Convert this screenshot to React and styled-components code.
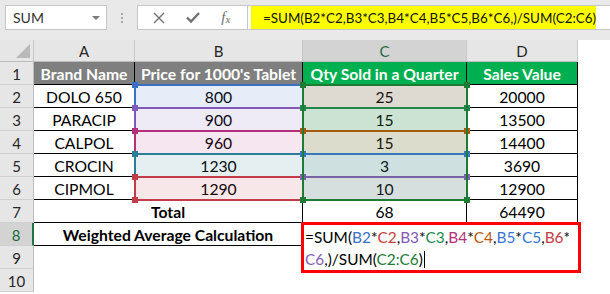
import React from 'react';
import styled, { createGlobalStyle } from 'styled-components';

const COLS = [34, 101, 168, 164, 111, 32];
const HEAD_H = 22;
const ROW_H = 23;
const colX = (i) => COLS.slice(0, i).reduce((a, b) => a + b, 0);
const rowY = (r) => HEAD_H + (r - 1) * ROW_H;

const K = {
  blue: '#3b6fc4',
  red: '#cc3a40',
  purple: '#7f5ab6',
  green: '#1f8a4c',
  magenta: '#b3307a',
  orange: '#b8560d',
  teal: '#2a7c98',
  blue2: '#3877cf',
  red2: '#c23c48',
  purple2: '#8460b8',
  range: '#1e7b34',
};

const GlobalStyle = createGlobalStyle`
  body {
    margin: 0;
    background: #fff;
    font-family: "Lato", "Open Sans", sans-serif;
    overflow: hidden;
  }
`;

const Page = styled.div`
  width: 610px;
  height: 294px;
  display: flex;
  flex-direction: column;
  overflow: hidden;
`;

const Toolbar = styled.div`
  height: 40px;
  box-sizing: border-box;
  padding: 5px 0 0 5px;
  background: #e9e9e9;
  display: flex;
  align-items: flex-start;
`;

const NameBox = styled.div`
  width: 102px;
  height: 25px;
  box-sizing: border-box;
  background: #fff;
  border: 1px solid #c6c6c6;
  display: flex;
  align-items: center;
  justify-content: space-between;
  padding: 0 6px 0 7px;
  font-size: 14px;
  color: #333;
`;

const Arrow = styled.span`
  width: 0;
  height: 0;
  border-left: 4px solid transparent;
  border-right: 4px solid transparent;
  border-top: 4px solid #7a7a7a;
`;

const Grip = styled.div`
  width: 30px;
  height: 25px;
  display: flex;
  flex-direction: column;
  align-items: center;
  justify-content: center;
  gap: 2px;
  span {
    width: 2px;
    height: 2px;
    background: #a8a8a8;
  }
`;

const FxBox = styled.div`
  width: 111px;
  height: 25px;
  box-sizing: border-box;
  background: #fff;
  border: 1px solid #c6c6c6;
  display: flex;
  align-items: center;
  justify-content: space-around;
  padding: 0 6px 0 4px;
  color: #6f6f6f;
`;

const Fx = styled.span`
  font-family: "Liberation Serif", serif;
  font-style: italic;
  font-size: 15px;
  color: #6f6f6f;
  sub {
    font-size: 11px;
    vertical-align: -1px;
  }
`;

const FormulaInput = styled.div`
  flex: 1;
  height: 25px;
  box-sizing: border-box;
  background: #fff;
  border-top: 1px solid #c6c6c6;
  border-bottom: 1px solid #c6c6c6;
  padding: 0 0 0 3px;
  display: flex;
  align-items: center;
`;

const Highlight = styled.div`
  width: 345px;
  height: 23px;
  background: #ffff00;
  display: flex;
  align-items: center;
  padding-left: 12px;
  box-sizing: border-box;
  font-size: 13.4px;
  color: #111;
  white-space: nowrap;
`;

const Sheet = styled.div`
  position: relative;
  display: grid;
  grid-template-columns: ${COLS.map((c) => c + 'px').join(' ')};
  grid-template-rows: ${HEAD_H}px repeat(10, ${ROW_H}px);
`;

const Corner = styled.div`
  background: #e6e6e6;
  border-right: 1px solid #c8c8c8;
  border-bottom: 1px solid #bdbdbd;
  display: flex;
  align-items: flex-end;
  justify-content: flex-end;
  padding: 0 3px 3px 0;
  &::after {
    content: '';
    width: 14px;
    height: 14px;
    background: #b9b9b9;
    clip-path: polygon(100% 0, 100% 100%, 0 100%);
  }
`;

const ColHead = styled.div`
  background: ${(p) => (p.$blank ? '#fff' : p.$sel ? '#d3d3d3' : '#e6e6e6')};
  color: ${(p) => (p.$sel ? '#1d6b3c' : '#262626')};
  border-right: ${(p) => (p.$blank ? 'none' : '1px solid #c8c8c8')};
  border-bottom: ${(p) => (p.$blank ? 'none' : '1px solid #bdbdbd')};
  display: flex;
  align-items: center;
  justify-content: center;
  font-size: 15px;
`;

const RowHead = styled.div`
  background: ${(p) => (p.$sel ? '#d3d3d3' : '#e6e6e6')};
  color: ${(p) => (p.$sel ? '#1d6b3c' : '#262626')};
  border-bottom: 1px solid #cfcfcf;
  border-right: ${(p) => (p.$sel ? '2px solid #217346' : '1px solid #bdbdbd')};
  display: flex;
  align-items: center;
  justify-content: center;
  font-size: 15px;
  padding-top: 1px;
  box-sizing: border-box;
`;

const Cell = styled.div`
  grid-column: span ${(p) => p.$span || 1};
  display: flex;
  align-items: center;
  justify-content: center;
  padding-top: 1px;
  box-sizing: border-box;
  font-size: 15.7px;
  white-space: nowrap;
  background: ${(p) => p.$bg || '#fff'};
  color: ${(p) => p.$fg || '#000'};
  font-weight: ${(p) => (p.$bold ? 700 : 400)};
  border-right: ${(p) => (p.$r ? '1px solid #000' : 'none')};
  border-bottom: ${(p) => (p.$b ? '1px solid #000' : 'none')};
`;

const RefBox = styled.div`
  position: absolute;
  box-sizing: border-box;
  border: 2px solid ${(p) => p.$c};
  background: ${(p) => p.$c}1f;
`;

const Handle = styled.span`
  position: absolute;
  width: 6px;
  height: 6px;
  background: ${(p) => p.$c};
  ${(p) => (p.$top ? 'top: -4px;' : 'bottom: -4px;')}
  ${(p) => (p.$left ? 'left: -4px;' : 'right: -4px;')}
`;

const Editor = styled.div`
  position: absolute;
  left: 301px;
  top: ${rowY(8) - 1}px;
  width: 280px;
  height: 51px;
  box-sizing: border-box;
  border: 3px solid #ff0000;
  background: #fff;
  padding: 1px 0 0 1px;
  font-size: 15.4px;
  line-height: 22px;
  color: #000;
  white-space: nowrap;
  z-index: 2;
`;

const Ref = styled.span`
  color: ${(p) => p.$c};
`;

const Caret = styled.span`
  display: inline-block;
  width: 1px;
  height: 17px;
  background: #000;
  vertical-align: -3px;
  margin-left: 1px;
`;

const XIcon = () => (
  <svg width="12" height="12" viewBox="0 0 12 12">
    <path d="M1 1 L11 11 M11 1 L1 11" stroke="#707070" strokeWidth="1.4" fill="none" />
  </svg>
);

const CheckIcon = () => (
  <svg width="14" height="11" viewBox="0 0 14 11">
    <path d="M1 5.5 L5 9.5 L13 1" stroke="#707070" strokeWidth="2.4" fill="none" />
  </svg>
);

const refs = [
  ['B', 2, 1, K.blue],
  ['C', 2, 1, K.red],
  ['B', 3, 1, K.purple],
  ['C', 3, 1, K.green],
  ['B', 4, 1, K.magenta],
  ['C', 4, 1, K.orange],
  ['B', 5, 1, K.teal],
  ['C', 5, 1, K.blue2],
  ['B', 6, 1, K.red2],
  ['C', 6, 1, K.purple2],
  ['C', 2, 5, K.range],
];

const colIndex = { A: 1, B: 2, C: 3, D: 4 };

const data = [
  ['DOLO 650', '800', '25', '20000'],
  ['PARACIP', '900', '15', '13500'],
  ['CALPOL', '960', '15', '14400'],
  ['CROCIN', '1230', '3', '3690'],
  ['CIPMOL', '1290', '10', '12900'],
];

const FormulaParts = ({ first }) => {
  const parts = [
    ['=SUM('], ['B2', K.blue], ['*'], ['C2', K.red], [','],
    ['B3', K.purple], ['*'], ['C3', K.green], [','],
    ['B4', K.magenta], ['*'], ['C4', K.orange], [','],
    ['B5', K.blue2], ['*'], ['C5', K.blue2], [','],
    ['B6', K.red2], ['*'],
  ];
  const rest = [['C6', K.purple2], [',)/SUM('], ['C2:C6', K.range], [')']];
  const render = (list) =>
    list.map(([t, c], i) => (c ? <Ref key={i} $c={c}>{t}</Ref> : <span key={i}>{t}</span>));
  return first ? render(parts) : render(rest);
};

export default function App() {
  return (
    <Page>
      <GlobalStyle />
      <Toolbar>
        <NameBox>
          SUM
          <Arrow />
        </NameBox>
        <Grip>
          <span />
          <span />
          <span />
        </Grip>
        <FxBox>
          <XIcon />
          <CheckIcon />
          <Fx>
            f<sub>x</sub>
          </Fx>
        </FxBox>
        <FormulaInput>
          <Highlight>=SUM(B2*C2,B3*C3,B4*C4,B5*C5,B6*C6,)/SUM(C2:C6)</Highlight>
        </FormulaInput>
      </Toolbar>

      <Sheet>
        <Corner />
        <ColHead>A</ColHead>
        <ColHead>B</ColHead>
        <ColHead $sel>C</ColHead>
        <ColHead>D</ColHead>
        <ColHead $blank />

        <RowHead>1</RowHead>
        <Cell $bg="#7f7f7f" $fg="#fff" $bold $r $b>Brand Name</Cell>
        <Cell $bg="#7f7f7f" $fg="#fff" $bold $r $b>Price for 1000's Tablet</Cell>
        <Cell $bg="#00b050" $fg="#fff" $bold $r $b>Qty Sold in a Quarter</Cell>
        <Cell $bg="#00b050" $fg="#fff" $bold $r $b>Sales Value</Cell>
        <Cell />

        {data.map((row, i) => (
          <React.Fragment key={i}>
            <RowHead>{i + 2}</RowHead>
            <Cell $r $b>{row[0]}</Cell>
            <Cell $r $b>{row[1]}</Cell>
            <Cell $r $b>{row[2]}</Cell>
            <Cell $r $b>{row[3]}</Cell>
            <Cell />
          </React.Fragment>
        ))}

        <RowHead>7</RowHead>
        <Cell $span={2} $bold $r $b>Total</Cell>
        <Cell $r $b>68</Cell>
        <Cell $r $b>64490</Cell>
        <Cell />

        <RowHead $sel>8</RowHead>
        <Cell $span={2} $bold $r $b>Weighted Average Calculation</Cell>
        <Cell />
        <Cell />
        <Cell />

        <RowHead>9</RowHead>
        <Cell $span={5} />
        <RowHead>10</RowHead>
        <Cell $span={5} />

        {refs.map(([col, row, span, c], i) => {
          const ci = colIndex[col];
          return (
            <RefBox
              key={i}
              $c={c}
              style={{
                left: colX(ci) - 1,
                top: rowY(row) - 1,
                width: COLS[ci] + 2,
                height: ROW_H * span + 2,
              }}
            >
              <Handle $c={c} $top $left />
              <Handle $c={c} $top />
              <Handle $c={c} $left />
              <Handle $c={c} />
            </RefBox>
          );
        })}

        <Editor>
          <FormulaParts first />
          <br />
          <FormulaParts />
          <Caret />
        </Editor>
      </Sheet>
    </Page>
  );
}
